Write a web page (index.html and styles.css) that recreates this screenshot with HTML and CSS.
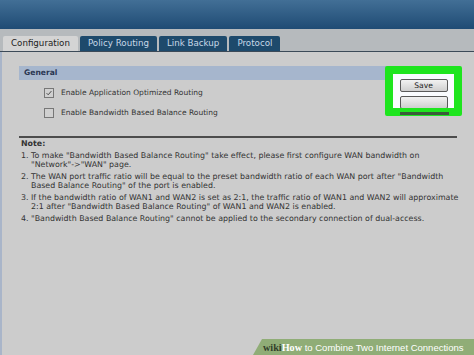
FILE: index.html
```html
<!DOCTYPE html>
<html lang="en">
<head>
    <meta charset="UTF-8">
    <title>Routing</title>
    <link rel="stylesheet" href="styles.css">
</head>
<body>

<div class="header"></div>

<div class="tabbar">
    <div class="tab active">Configuration</div>
    <div class="tab">Policy Routing</div>
    <div class="tab">Link Backup</div>
    <div class="tab">Protocol</div>
</div>

<div class="content">
    <div class="general">
        <div class="section-head">General</div>

        <div class="row">
            <span class="check">
                <svg viewBox="0 0 10 10"><path d="M2 5.2l2 2 4-4.6"/></svg>
            </span>
            <span>Enable Application Optimized Routing</span>
        </div>
        <div class="row">
            <span class="check"></span>
            <span>Enable Bandwidth Based Balance Routing</span>
        </div>

        <!-- highlighted save box -->
        <div class="save-box">
            <div class="save-inner">
                <div class="save-strip"></div>
                <button class="btn">Save</button>
                <button class="btn btn-cut"></button>
            </div>
            <div class="save-shadow"></div>
        </div>
    </div>

    <div class="divider"></div>

    <div class="note">
        <div class="note-title">Note:</div>
        <ol>
            <li>To make "Bandwidth Based Balance Routing" take effect, please first configure WAN bandwidth on "Network"-&gt;"WAN" page.</li>
            <li>The WAN port traffic ratio will be equal to the preset bandwidth ratio of each WAN port after "Bandwidth Based Balance Routing" of the port is enabled.</li>
            <li>If the bandwidth ratio of WAN1 and WAN2 is set as 2:1, the traffic ratio of WAN1 and WAN2 will approximate 2:1 after "Bandwidth Based Balance Routing" of WAN1 and WAN2 is enabled.</li>
            <li>"Bandwidth Based Balance Routing" cannot be applied to the secondary connection of dual-access.</li>
        </ol>
    </div>
</div>

<div class="banner">
    <span class="wiki">wiki</span><span class="how">How</span> to Combine Two Internet Connections
</div>

</body>
</html>
```

FILE: styles.css
```css
body {
    margin: 0;
    width: 474px;
    height: 355px;
    overflow: hidden;
    background-color: #cccccc;
    font-family: "DejaVu Sans", Verdana, sans-serif;
    position: relative;
}

.header {
    height: 29px;
    background: linear-gradient(#426f96, #1f4b74);
}

/* tabs */
.tabbar {
    height: 22px;
    background-color: #b6babd;
    border-bottom: 1px solid #3c4a58;
    display: flex;
    align-items: flex-end;
    padding-left: 3px;
    gap: 2px;
}

.tab {
    height: 15px;
    line-height: 15px;
    padding: 0 8px;
    font-size: 8.7px;
    color: #c9d9e8;
    background-color: #1e4a6c;
    border-radius: 2px 2px 0 0;
}

.tab.active {
    background-color: #d4d4d4;
    color: #222;
}

.content {
    height: 303px;
    padding: 14px 17px 0 17px;
    border-left: 2px solid #a9b5c9;
    box-sizing: border-box;
}

.general {
    position: relative;
}

.section-head {
    height: 14px;
    line-height: 14px;
    background-color: #a6b6cd;
    padding-left: 5px;
    font-size: 7.6px;
    font-weight: bold;
    color: #2b3752;
    margin-right: 2px;
}

.row {
    display: flex;
    align-items: center;
    gap: 7px;
    height: 17px;
    padding-left: 25px;
    font-size: 7.5px;
    color: #333;
    margin-top: 4px;
}

.row + .row {
    margin-top: 3px;
}

.check {
    width: 8px;
    height: 8px;
    border: 1px solid #777;
    background-color: #d0d0d0;
    display: flex;
}

.check svg {
    width: 8px;
    height: 8px;
    fill: none;
    stroke: #444;
    stroke-width: 1.2;
}

/* green highlight around save */
.save-box {
    position: absolute;
    top: 0;
    left: 366px;
    width: 61px;
    height: 34px;
    border: 8px solid #1ee51e;
    border-radius: 2px;
    background-color: #1ee51e;
}

.save-inner {
    background-color: #fafcff;
    height: 100%;
    overflow: hidden;
    display: flex;
    flex-direction: column;
    align-items: center;
}

.save-strip {
    width: 100%;
    height: 6px;
    background-color: #d9e4f4;
    margin-bottom: 5px;
}

.save-shadow {
    height: 3px;
    margin: 4px 5px 0 7px;
    background-color: #3a5a3a;
}

.btn {
    width: 48px;
    height: 13px;
    padding: 0;
    border: 1px solid #5a5a5a;
    border-radius: 2px;
    background: linear-gradient(#f2f2f2, #cfcfcf);
    font-family: "DejaVu Sans", Verdana, sans-serif;
    font-size: 7.6px;
    color: #222;
    flex-shrink: 0;
}

.btn-cut {
    margin-top: 4px;
}

.divider {
    height: 2px;
    background-color: #4c4c4c;
    margin-top: 15px;
}

.note {
    padding-top: 1px;
    padding-left: 2px;
    margin-right: -5px;
    font-size: 7.9px;
    color: #333;
}

.note-title {
    font-weight: bold;
    line-height: 9px;
    margin-bottom: 3px;
}

.note ol {
    margin: 0;
    padding-left: 10px;
}

.note li {
    line-height: 9px;
    margin-bottom: 3px;
}

/* wikihow caption */
.banner {
    position: absolute;
    right: 0;
    bottom: 0;
    width: 221px;
    height: 16px;
    line-height: 17px;
    padding-left: 10px;
    box-sizing: border-box;
    white-space: nowrap;
    background-color: #90ad77;
    clip-path: polygon(9px 0, 100% 0, 100% 100%, 0 100%);
    font-family: "Liberation Sans", Arial, sans-serif;
    font-size: 9.5px;
    color: #fff;
}

.wiki {
    font-family: "Liberation Serif", serif;
    font-weight: bold;
    font-size: 10.2px;
    color: #33402a;
}

.how {
    font-family: "Liberation Serif", serif;
    font-weight: bold;
    font-size: 10.2px;
}
```
